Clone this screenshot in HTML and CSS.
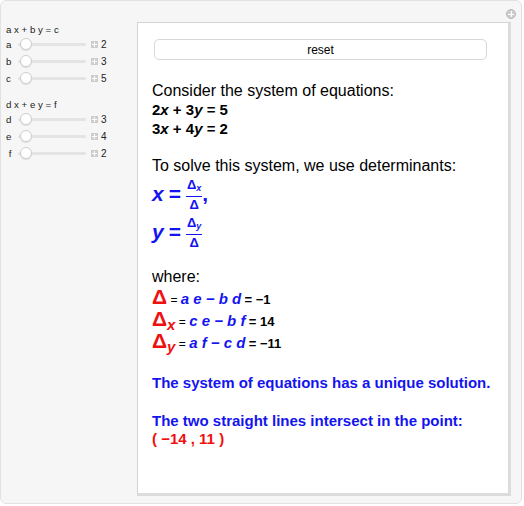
FILE: index.html
```html
<!DOCTYPE html>
<html>
<head>
<title>Solving a System of Two Linear Equations with Determinants</title>
<link rel="stylesheet" href="styles.css">
</head>
<body>
<div class="frame">
  <span class="more"></span>
  <div class="controls">
    <div class="eq">a x + b y = c</div>
    <div class="row"><span class="lbl">a</span><span class="track"><span class="thumb"></span></span><span class="plus"></span><span class="val">2</span></div>
    <div class="row"><span class="lbl">b</span><span class="track"><span class="thumb"></span></span><span class="plus"></span><span class="val">3</span></div>
    <div class="row"><span class="lbl">c</span><span class="track"><span class="thumb"></span></span><span class="plus"></span><span class="val">5</span></div>
    <div class="eq second">d x + e y = f</div>
    <div class="row"><span class="lbl">d</span><span class="track"><span class="thumb"></span></span><span class="plus"></span><span class="val">3</span></div>
    <div class="row"><span class="lbl">e</span><span class="track"><span class="thumb"></span></span><span class="plus"></span><span class="val">4</span></div>
    <div class="row"><span class="lbl">&nbsp;f</span><span class="track"><span class="thumb"></span></span><span class="plus"></span><span class="val">2</span></div>
  </div>
  <div class="panel">
    <div class="reset">reset</div>
    <p class="txt">Consider the system of equations:<br>
      <b>2<i>x</i> + 3<i>y</i> = 5</b><br>
      <b>3<i>x</i> + 4<i>y</i> = 2</b></p>
    <p class="txt">To solve this system, we use determinants:</p>
    <div class="formula"><i>x</i> = <span class="frac"><span class="num">&Delta;<sub>x</sub></span><span class="den">&Delta;</span></span>,</div>
    <div class="formula"><i>y</i> = <span class="frac"><span class="num">&Delta;<sub>y</sub></span><span class="den">&Delta;</span></span></div>
    <p class="txt where">where:</p>
    <div class="det"><span class="dl">&Delta;</span> = <span class="ex">a e &minus; b d</span> <b>= &minus;1</b></div>
    <div class="det"><span class="dl">&Delta;<sub>x</sub></span> = <span class="ex">c e &minus; b f</span> <b>= 14</b></div>
    <div class="det"><span class="dl">&Delta;<sub>y</sub></span> = <span class="ex">a f &minus; c d</span> <b>= &minus;11</b></div>
    <p class="msg">The system of equations has a unique solution.</p>
    <p class="msg">The two straight lines intersect in the point:<br>
      <span class="pt">( &minus;14 , 11 )</span></p>
  </div>
</div>
</body>
</html>
```
FILE: styles.css
```css
body {
  margin: 0;
  font-family: "Liberation Sans", Arial, sans-serif;
}

.frame {
  position: relative;
  display: flex;
  align-items: flex-start;
  width: 522px;
  height: 504px;
  border: 1px solid #e2e2e2;
  border-radius: 6px;
  background: #f6f6f6;
  box-sizing: border-box;
}

.more {
  position: absolute;
  top: 8px;
  right: 5px;
  width: 8px;
  height: 8px;
  border: 1px solid #b8b8b8;
  border-radius: 50%;
  background: #cfcfcf;
}
.more:before, .more:after {
  content: "";
  position: absolute;
  background: #fff;
}
.more:before { left: 1px; top: 3.5px; width: 6px; height: 1px; }
.more:after { left: 3.5px; top: 1px; width: 1px; height: 6px; }

/* sliders */
.controls {
  width: 131px;
  padding: 22px 0 0 5px;
  font-size: 9.7px;
  color: #222;
}
.eq { height: 13px; line-height: 13px; }
.eq.second { margin-top: 12px; }
.row {
  display: flex;
  align-items: center;
  height: 17px;
}
.row:nth-child(4) { height: 16px; }
.lbl { width: 12px; }
.track {
  position: relative;
  width: 68px;
  height: 3px;
  border-radius: 2px;
  background: #e4e4e4;
}
.thumb {
  position: absolute;
  left: 2px;
  top: -5px;
  width: 12px;
  height: 12px;
  border-radius: 50%;
  background: #fff;
  border: 1px solid #cfcfcf;
  box-sizing: border-box;
  box-shadow: 0 1px 1px rgba(0,0,0,0.1);
}
.plus {
  position: relative;
  width: 7px;
  height: 7px;
  margin-left: 5px;
  background: #cdcdcd;
}
.plus:before, .plus:after { content: ""; position: absolute; background: #fff; }
.plus:before { left: 1px; top: 3px; width: 5px; height: 1px; }
.plus:after { left: 3px; top: 1px; width: 1px; height: 5px; }
.val { margin-left: 3px; font-size: 10px; }

/* output */
.panel {
  margin-top: 21px;
  width: 374px;
  height: 474px;
  padding: 16px 0 0 14px;
  box-sizing: border-box;
  background: #fff;
  border-left: 1px solid #d4d4d4;
  border-top: 1px solid #d4d4d4;
  border-right: 3px solid #dcdcdc;
  border-bottom: 3px solid #dcdcdc;
  color: #000;
}
.reset {
  width: 333px;
  height: 21px;
  margin-left: 2px;
  line-height: 21px;
  border: 1px solid #d8d8d8;
  border-radius: 5px;
  text-align: center;
  font-size: 12px;
  box-sizing: border-box;
}
.txt {
  margin: 0;
  font-size: 16px;
  line-height: 19px;
}
.panel .txt:nth-of-type(1) { margin-top: 21px; }
.panel .txt:nth-of-type(2) { margin-top: 18px; }
.txt b { font-size: 15px; }

.formula {
  display: flex;
  align-items: center;
  color: #1414f0;
  font-weight: bold;
  font-size: 21px;
  height: 38px;
}
.formula i { margin-right: 5px; }
.frac {
  display: inline-flex;
  flex-direction: column;
  align-items: center;
  margin-left: 5px;
  font-size: 13px;
  line-height: 15px;
}
.num { border-bottom: 1.5px solid #1414f0; padding: 0 1px; }
.num sub { font-size: 9px; font-style: italic; vertical-align: -2px; }

.where { margin-top: 16px; }
.det {
  height: 22px;
  line-height: 22px;
  font-size: 12px;
}
.dl {
  color: #f01010;
  font-weight: bold;
  font-size: 21px;
}
.dl sub { font-size: 15px; font-style: italic; vertical-align: -4px; }
.ex {
  color: #1414f0;
  font-weight: bold;
  font-style: italic;
  font-size: 15px;
}
.det b { font-size: 13px; }

.msg {
  margin: 22px 0 0;
  color: #1414f0;
  font-weight: bold;
  font-size: 15px;
  line-height: 18px;
}
.msg:nth-of-type(5) { margin-top: 20px; }
.pt { color: #f01010; }
```
